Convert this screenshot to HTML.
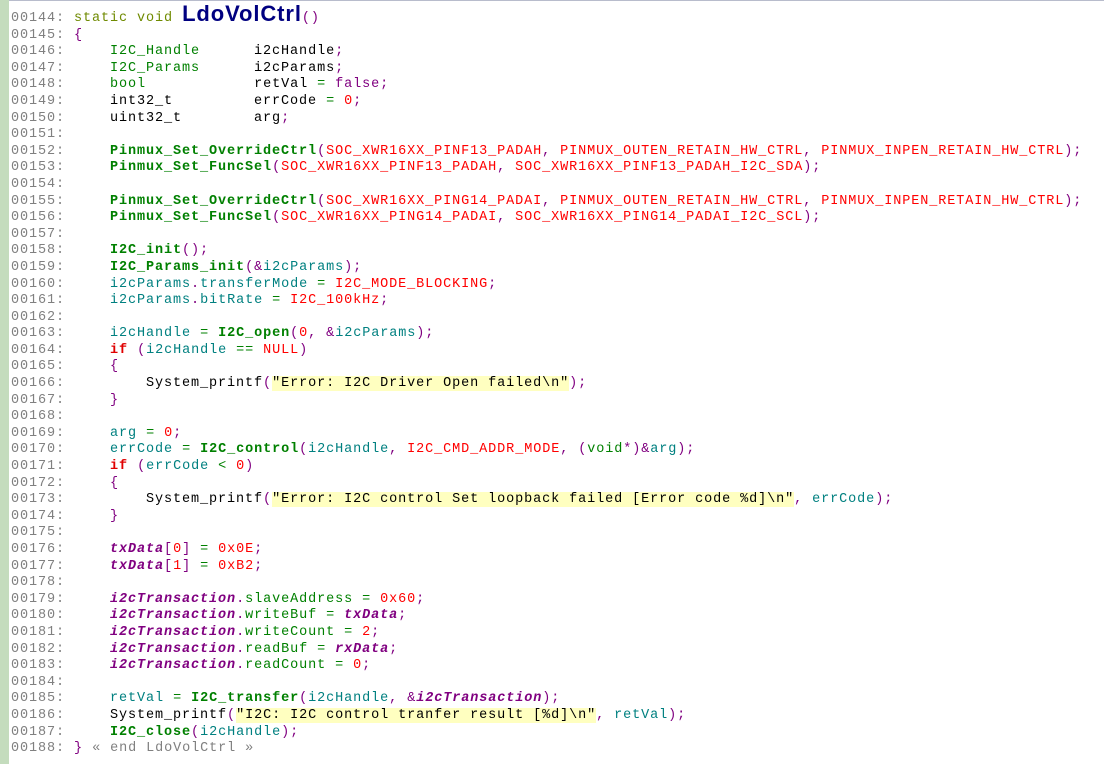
<!DOCTYPE html>
<html><head><meta charset="utf-8"><style>
html,body{margin:0;padding:0;background:#fff;width:1104px;height:764px;overflow:hidden;position:relative}
.bar{position:absolute;left:0;top:0;width:9px;height:764px;background:#c4dcbd}
.top{position:absolute;left:0;top:0;width:1104px;height:1px;background:#b8bccc}
pre{position:absolute;left:11px;top:9px;margin:0;font-family:"Liberation Mono",monospace;font-size:13.5px;letter-spacing:0.9px;line-height:16.6px;color:#000;white-space:pre}
.n{color:#808080}.k{color:#6f8a00}.t{color:#008000}.f{color:#008000;font-weight:bold}.v{color:#008080}.p{color:#800080}.o{color:#008000}.r{color:#ff0000}.s{background:#ffffc0}.i{color:#800080;font-style:italic;font-weight:bold}.kw{color:#e00000;font-weight:bold}.g{color:#808080}
.big{font-family:"Liberation Sans",sans-serif;font-weight:bold;font-size:22px;color:#000080;letter-spacing:0.9px;line-height:10px}
</style></head><body>
<div class="top"></div><div class="bar"></div>
<pre><span class="n">00144:</span> <span class="k">static void</span> <span class="big">LdoVolCtrl</span><span class="p">()</span>
<span class="n">00145:</span> <span class="p">{</span>
<span class="n">00146:</span>     <span class="t">I2C_Handle</span>      i2cHandle<span class="p">;</span>
<span class="n">00147:</span>     <span class="t">I2C_Params</span>      i2cParams<span class="p">;</span>
<span class="n">00148:</span>     <span class="t">bool</span>            retVal <span class="o">=</span> <span class="p">false;</span>
<span class="n">00149:</span>     int32_t         errCode <span class="o">=</span> <span class="r">0</span><span class="p">;</span>
<span class="n">00150:</span>     uint32_t        arg<span class="p">;</span>
<span class="n">00151:</span>
<span class="n">00152:</span>     <span class="f">Pinmux_Set_OverrideCtrl</span><span class="p">(</span><span class="r">SOC_XWR16XX_PINF13_PADAH</span><span class="p">,</span> <span class="r">PINMUX_OUTEN_RETAIN_HW_CTRL</span><span class="p">,</span> <span class="r">PINMUX_INPEN_RETAIN_HW_CTRL</span><span class="p">);</span>
<span class="n">00153:</span>     <span class="f">Pinmux_Set_FuncSel</span><span class="p">(</span><span class="r">SOC_XWR16XX_PINF13_PADAH</span><span class="p">,</span> <span class="r">SOC_XWR16XX_PINF13_PADAH_I2C_SDA</span><span class="p">);</span>
<span class="n">00154:</span>
<span class="n">00155:</span>     <span class="f">Pinmux_Set_OverrideCtrl</span><span class="p">(</span><span class="r">SOC_XWR16XX_PING14_PADAI</span><span class="p">,</span> <span class="r">PINMUX_OUTEN_RETAIN_HW_CTRL</span><span class="p">,</span> <span class="r">PINMUX_INPEN_RETAIN_HW_CTRL</span><span class="p">);</span>
<span class="n">00156:</span>     <span class="f">Pinmux_Set_FuncSel</span><span class="p">(</span><span class="r">SOC_XWR16XX_PING14_PADAI</span><span class="p">,</span> <span class="r">SOC_XWR16XX_PING14_PADAI_I2C_SCL</span><span class="p">);</span>
<span class="n">00157:</span>
<span class="n">00158:</span>     <span class="f">I2C_init</span><span class="p">();</span>
<span class="n">00159:</span>     <span class="f">I2C_Params_init</span><span class="p">(&amp;</span><span class="v">i2cParams</span><span class="p">);</span>
<span class="n">00160:</span>     <span class="v">i2cParams</span><span class="p">.</span><span class="v">transferMode</span> <span class="o">=</span> <span class="r">I2C_MODE_BLOCKING</span><span class="p">;</span>
<span class="n">00161:</span>     <span class="v">i2cParams</span><span class="p">.</span><span class="v">bitRate</span> <span class="o">=</span> <span class="r">I2C_100kHz</span><span class="p">;</span>
<span class="n">00162:</span>
<span class="n">00163:</span>     <span class="v">i2cHandle</span> <span class="o">=</span> <span class="f">I2C_open</span><span class="p">(</span><span class="r">0</span><span class="p">,</span> <span class="p">&amp;</span><span class="v">i2cParams</span><span class="p">);</span>
<span class="n">00164:</span>     <span class="kw">if</span> <span class="p">(</span><span class="v">i2cHandle</span> <span class="o">==</span> <span class="r">NULL</span><span class="p">)</span>
<span class="n">00165:</span>     <span class="p">{</span>
<span class="n">00166:</span>         System_printf<span class="p">(</span><span class="s">"Error: I2C Driver Open failed\n"</span><span class="p">);</span>
<span class="n">00167:</span>     <span class="p">}</span>
<span class="n">00168:</span>
<span class="n">00169:</span>     <span class="v">arg</span> <span class="o">=</span> <span class="r">0</span><span class="p">;</span>
<span class="n">00170:</span>     <span class="v">errCode</span> <span class="o">=</span> <span class="f">I2C_control</span><span class="p">(</span><span class="v">i2cHandle</span><span class="p">,</span> <span class="r">I2C_CMD_ADDR_MODE</span><span class="p">,</span> <span class="p">(</span><span class="t">void</span><span class="p">*)&amp;</span><span class="v">arg</span><span class="p">);</span>
<span class="n">00171:</span>     <span class="kw">if</span> <span class="p">(</span><span class="v">errCode</span> <span class="o">&lt;</span> <span class="r">0</span><span class="p">)</span>
<span class="n">00172:</span>     <span class="p">{</span>
<span class="n">00173:</span>         System_printf<span class="p">(</span><span class="s">"Error: I2C control Set loopback failed [Error code %d]\n"</span><span class="p">,</span> <span class="v">errCode</span><span class="p">);</span>
<span class="n">00174:</span>     <span class="p">}</span>
<span class="n">00175:</span>
<span class="n">00176:</span>     <span class="i">txData</span><span class="p">[</span><span class="r">0</span><span class="p">]</span> <span class="o">=</span> <span class="r">0x0E</span><span class="p">;</span>
<span class="n">00177:</span>     <span class="i">txData</span><span class="p">[</span><span class="r">1</span><span class="p">]</span> <span class="o">=</span> <span class="r">0xB2</span><span class="p">;</span>
<span class="n">00178:</span>
<span class="n">00179:</span>     <span class="i">i2cTransaction</span><span class="p">.</span><span class="t">slaveAddress</span> <span class="o">=</span> <span class="r">0x60</span><span class="p">;</span>
<span class="n">00180:</span>     <span class="i">i2cTransaction</span><span class="p">.</span><span class="t">writeBuf</span> <span class="o">=</span> <span class="i">txData</span><span class="p">;</span>
<span class="n">00181:</span>     <span class="i">i2cTransaction</span><span class="p">.</span><span class="t">writeCount</span> <span class="o">=</span> <span class="r">2</span><span class="p">;</span>
<span class="n">00182:</span>     <span class="i">i2cTransaction</span><span class="p">.</span><span class="t">readBuf</span> <span class="o">=</span> <span class="i">rxData</span><span class="p">;</span>
<span class="n">00183:</span>     <span class="i">i2cTransaction</span><span class="p">.</span><span class="t">readCount</span> <span class="o">=</span> <span class="r">0</span><span class="p">;</span>
<span class="n">00184:</span>
<span class="n">00185:</span>     <span class="v">retVal</span> <span class="o">=</span> <span class="f">I2C_transfer</span><span class="p">(</span><span class="v">i2cHandle</span><span class="p">,</span> <span class="p">&amp;</span><span class="i">i2cTransaction</span><span class="p">);</span>
<span class="n">00186:</span>     System_printf<span class="p">(</span><span class="s">"I2C: I2C control tranfer result [%d]\n"</span><span class="p">,</span> <span class="v">retVal</span><span class="p">);</span>
<span class="n">00187:</span>     <span class="f">I2C_close</span><span class="p">(</span><span class="v">i2cHandle</span><span class="p">);</span>
<span class="n">00188:</span> <span class="p">}</span> <span class="g">« end LdoVolCtrl »</span>
</pre>
</body></html>
